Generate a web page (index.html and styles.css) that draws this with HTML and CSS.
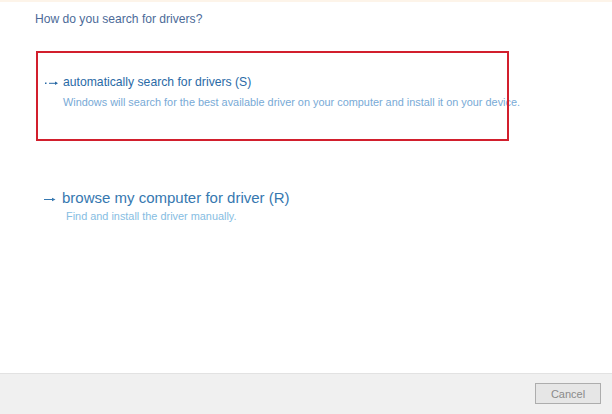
FILE: index.html
```html
<!DOCTYPE html>
<html>
<head>
<meta charset="utf-8">
<link rel="stylesheet" href="styles.css">
</head>
<body>
<div class="window">
  <div class="topline"></div>
  <main class="content">
    <h1 class="heading">How do you search for drivers?</h1>
    <div class="option option-auto">
      <div class="option-row">
        <svg class="arrow arrow-small" width="14" height="6" viewBox="0 0 14 6">
          <rect x="0" y="2.5" width="1.5" height="1.5" fill="#2a6aa6"/>
          <path d="M4 3.3 H12" stroke="#2a6aa6" stroke-width="1"/>
          <path d="M10 1.6 L13 3.3 L10 5 Z" fill="#2a6aa6"/>
        </svg>
        <span class="option-title">automatically search for drivers (S)</span>
      </div>
      <p class="option-desc">Windows will search for the best available driver on your computer and install it on your device.</p>
    </div>
    <div class="option option-browse">
      <div class="option-row">
        <svg class="arrow arrow-big" width="14" height="8" viewBox="0 0 14 8">
          <path d="M1 4.5 H11" stroke="#3678b0" stroke-width="1"/>
          <path d="M9 2.7 L12.5 4.5 L9 6.3 Z" fill="#3678b0"/>
        </svg>
        <span class="option-title option-title-big">browse my computer for driver (R)</span>
      </div>
      <p class="option-desc option-desc-browse">Find and install the driver manually.</p>
    </div>
  </main>
  <footer class="footer">
    <button class="btn-cancel">Cancel</button>
  </footer>
</div>
</body>
</html>
```
FILE: styles.css
```css
html, body {
  margin: 0;
  padding: 0;
  background: #ffffff;
}
.window {
  width: 612px;
  height: 414px;
  display: flex;
  flex-direction: column;
  font-family: "Liberation Sans", Arial, sans-serif;
}
.topline {
  height: 2px;
  background: #fdf4e9;
}
.content {
  flex: 1;
  padding-left: 35px;
}
.heading {
  margin: 10px 0 0 0;
  font-size: 12.1px;
  font-weight: normal;
  line-height: 14px;
  color: #4c6a98;
}
.option-auto {
  position: relative;
  margin-top: 25px;
  margin-left: 1px;
  width: 473px;
  height: 90px;
  box-sizing: border-box;
  padding: 2px;
}
.option-auto::after {
  content: "";
  position: absolute;
  inset: 0;
  border: 2px solid #d21f2d;
  pointer-events: none;
}
.option-row {
  display: flex;
  align-items: center;
}
.option-auto .option-row {
  margin-top: 22px;
  padding-left: 7px;
}
.arrow-small {
  margin-right: 4px;
  margin-top: 2px;
}
.option-title {
  font-size: 12.2px;
  line-height: 14px;
  color: #2a6aa6;
}
.option-desc {
  margin: 7px 0 0 25px;
  font-size: 10.9px;
  line-height: 12px;
  color: #78aad6;
  white-space: nowrap;
}
.option-browse {
  margin-top: 48px;
}
.option-browse .option-row {
  padding-left: 8px;
}
.arrow-big {
  margin-right: 5px;
  margin-top: 2px;
}
.option-title-big {
  font-size: 15px;
  line-height: 18px;
  color: #3678b0;
}
.option-desc-browse {
  margin: 3px 0 0 31px;
  color: #86bde2;
}
.footer {
  height: 40px;
  background: #f0f0f0;
  border-top: 1px solid #e2e2e2;
  display: flex;
  justify-content: flex-end;
  align-items: flex-start;
}
.btn-cancel {
  margin: 9px 11px 0 0;
  width: 66px;
  height: 21px;
  padding: 0;
  background: #e6e6e6;
  border: 1px solid #adadad;
  border-radius: 0;
  font-family: "Liberation Sans", Arial, sans-serif;
  font-size: 11px;
  color: #8a8a8a;
}
```
